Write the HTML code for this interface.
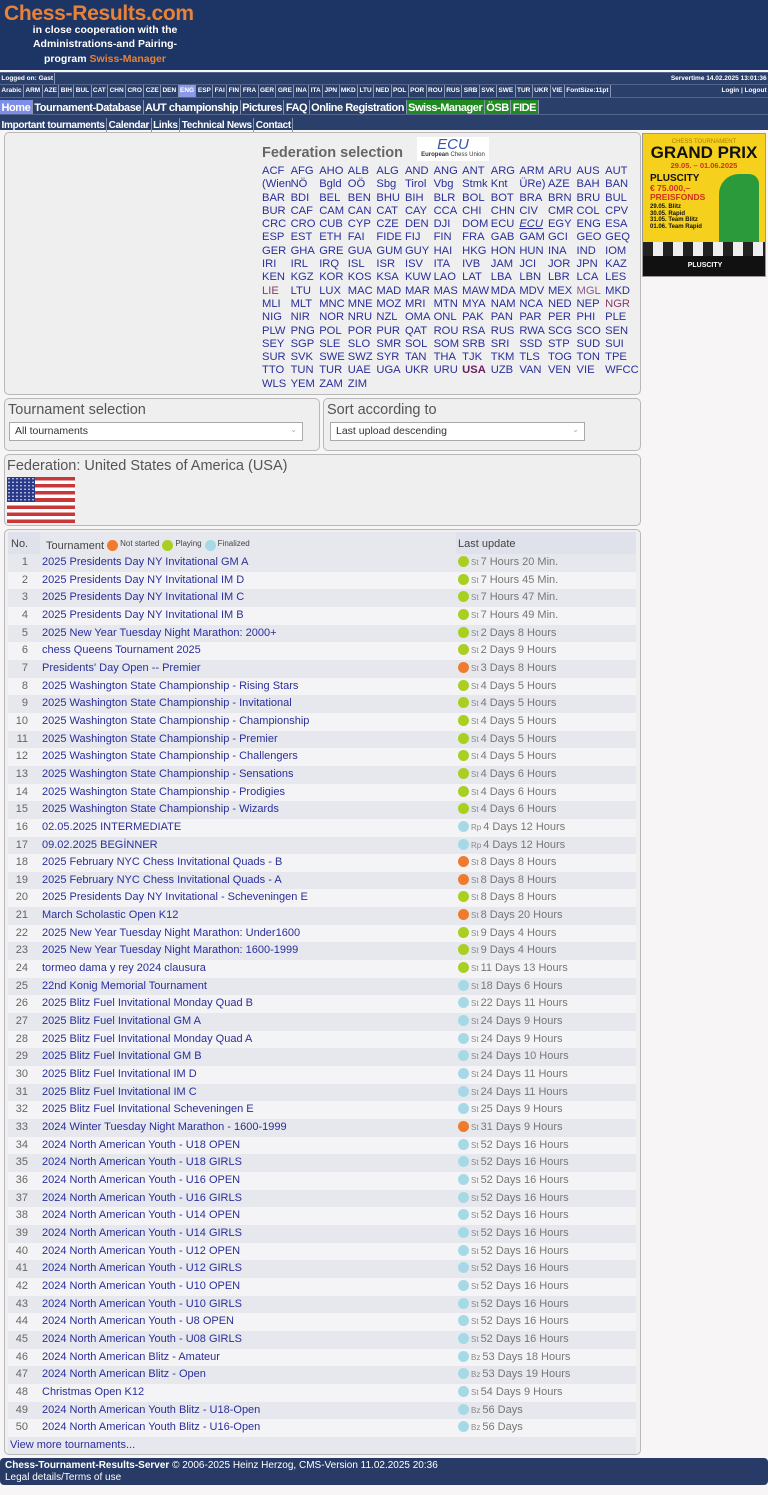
<!DOCTYPE html>
<html><head><meta charset="utf-8"><style>
*{margin:0;padding:0;box-sizing:border-box}
body{width:768px;height:1495px;background:#f7f5f5;font-family:"Liberation Sans",sans-serif;position:relative;overflow:hidden;color:#333}
.hdr{position:absolute;left:0;top:0;width:768px;height:70px;background:#1c3564}
.logo{position:absolute;left:4px;top:2px;color:#e8823a;font-size:21px;font-weight:bold;letter-spacing:-.3px}
.sub{position:absolute;left:0;width:210px;text-align:center;color:#fff;font-size:10.5px;font-weight:bold}
.bar{position:absolute;left:0;width:768px;background:#2b3f6b;color:#fff;font-size:6.5px;font-weight:bold;white-space:nowrap}
.bar span{display:inline-block;padding:0 1.4px;border-right:1px solid #8894b0;line-height:12px}
.menu{position:absolute;left:0;width:768px;background:#2b3f6b;border-top:1px solid #55658a;white-space:nowrap}
.menu span{display:inline-block;color:#fff;font-weight:bold;font-size:11px;padding:0 1.5px;line-height:16px;border-right:1px solid #8894b0;letter-spacing:-.45px}
.box{position:absolute;background:#efefef;border:1px solid #b8b8b8;border-radius:5px}
.grid{position:absolute;left:262px;top:165px;width:380px;font-size:11.2px;line-height:13.3px;color:#2a2f9a}
.grid span{display:inline-block;width:28.6px;white-space:nowrap}
.t{position:absolute;font-size:14.5px;color:#555}
.sel{position:absolute;background:#fff;border:1px solid #aaa;font-size:10.5px;color:#333;padding:2px 5px;height:19px}
.sel i{position:absolute;right:5px;top:2px;font-style:normal;color:#aaa;font-size:8px}
.rows{position:absolute;left:8px;top:554px;width:628px}
.r{height:17.67px;position:relative;font-size:11px;line-height:17.67px}
.r:nth-child(odd){background:#e6e8ee}
.r:nth-child(even){background:#f4f4f6}
.n{position:absolute;left:0;width:20px;text-align:right;color:#666}
.nm{position:absolute;left:34px;color:#2b2f9a;white-space:nowrap}
.u{position:absolute;left:450px;color:#777;white-space:nowrap}
.d{display:inline-block;width:11px;height:11px;border-radius:50%;vertical-align:-2px;margin-right:2px}
.g{background:#a8cf22}.o{background:#ef7b2e}.b{background:#a6d9e6}
.u small{font-size:8px;color:#888;margin-right:2px}
</style></head><body>
<div class="hdr">
<div class="logo">Chess-Results.com</div>
<div class="sub" style="top:24px">in close cooperation with the</div>
<div class="sub" style="top:38px">Administrations-and Pairing-</div>
<div class="sub" style="top:53px">program <span style="color:#e8823a">Swiss-Manager</span></div>
</div>
<div class="bar" style="top:72px;height:12px;border-top:1px solid #55658a"><span>Logged on: Gast</span><span style="position:absolute;right:0;border:0">Servertime 14.02.2025 13:01:36</span></div>
<div class="bar" style="top:84px;height:13px;border-top:1px solid #55658a"><span>Arabic</span><span>ARM</span><span>AZE</span><span>BIH</span><span>BUL</span><span>CAT</span><span>CHN</span><span>CRO</span><span>CZE</span><span>DEN</span><span style="background:#8a9ae8">ENG</span><span>ESP</span><span>FAI</span><span>FIN</span><span>FRA</span><span>GER</span><span>GRE</span><span>INA</span><span>ITA</span><span>JPN</span><span>MKD</span><span>LTU</span><span>NED</span><span>POL</span><span>POR</span><span>ROU</span><span>RUS</span><span>SRB</span><span>SVK</span><span>SWE</span><span>TUR</span><span>UKR</span><span>VIE</span><span>FontSize:11pt</span><span style="position:absolute;right:0;border:0">Login | Logout</span></div>
<div class="menu" style="top:97px;height:17px"><span style="background:#7d8ee8">Home</span><span>Tournament-Database</span><span>AUT championship</span><span>Pictures</span><span>FAQ</span><span>Online Registration</span><span style="background:#1f8a1f">Swiss-Manager</span><span style="background:#1f8a1f">ÖSB</span><span style="background:#1f8a1f">FIDE</span></div>
<div class="menu" style="top:114px;height:16px"><span style="font-size:10px;letter-spacing:-.3px">Important tournaments</span><span style="font-size:10px;letter-spacing:-.3px">Calendar</span><span style="font-size:10px;letter-spacing:-.3px">Links</span><span style="font-size:10px;letter-spacing:-.3px">Technical News</span><span style="font-size:10px;letter-spacing:-.3px">Contact</span></div>

<div class="box" style="left:4px;top:132px;width:637px;height:263px"></div>
<div class="t" style="left:262px;top:145px;font-weight:bold;color:#666">Federation selection</div>
<div style="position:absolute;left:417px;top:137px;width:72px;height:24px;background:#fff;font-size:6px;color:#333;text-align:center"><div style="font-size:15px;color:#3355aa;font-style:italic;line-height:15px">ECU</div><b>European</b> Chess Union</div>
<div class="grid"><span>ACF</span><span>AFG</span><span>AHO</span><span>ALB</span><span>ALG</span><span>AND</span><span>ANG</span><span>ANT</span><span>ARG</span><span>ARM</span><span>ARU</span><span>AUS</span><span>AUT</span><span>(Wien</span><span>NÖ</span><span>Bgld</span><span>OÖ</span><span>Sbg</span><span>Tirol</span><span>Vbg</span><span>Stmk</span><span>Knt</span><span>ÜRe)</span><span>AZE</span><span>BAH</span><span>BAN</span><span>BAR</span><span>BDI</span><span>BEL</span><span>BEN</span><span>BHU</span><span>BIH</span><span>BLR</span><span>BOL</span><span>BOT</span><span>BRA</span><span>BRN</span><span>BRU</span><span>BUL</span><span>BUR</span><span>CAF</span><span>CAM</span><span>CAN</span><span>CAT</span><span>CAY</span><span>CCA</span><span>CHI</span><span>CHN</span><span>CIV</span><span>CMR</span><span>COL</span><span>CPV</span><span>CRC</span><span>CRO</span><span>CUB</span><span>CYP</span><span>CZE</span><span>DEN</span><span>DJI</span><span>DOM</span><span>ECU</span><span style="font-style:italic;text-decoration:underline">ECU</span><span>EGY</span><span>ENG</span><span>ESA</span><span>ESP</span><span>EST</span><span>ETH</span><span>FAI</span><span>FIDE</span><span>FIJ</span><span>FIN</span><span>FRA</span><span>GAB</span><span>GAM</span><span>GCI</span><span>GEO</span><span>GEQ</span><span>GER</span><span>GHA</span><span>GRE</span><span>GUA</span><span>GUM</span><span>GUY</span><span>HAI</span><span>HKG</span><span>HON</span><span>HUN</span><span>INA</span><span>IND</span><span>IOM</span><span>IRI</span><span>IRL</span><span>IRQ</span><span>ISL</span><span>ISR</span><span>ISV</span><span>ITA</span><span>IVB</span><span>JAM</span><span>JCI</span><span>JOR</span><span>JPN</span><span>KAZ</span><span>KEN</span><span>KGZ</span><span>KOR</span><span>KOS</span><span>KSA</span><span>KUW</span><span>LAO</span><span>LAT</span><span>LBA</span><span>LBN</span><span>LBR</span><span>LCA</span><span>LES</span><span style="color:#8a3a6a">LIE</span><span>LTU</span><span>LUX</span><span>MAC</span><span>MAD</span><span>MAR</span><span>MAS</span><span>MAW</span><span>MDA</span><span>MDV</span><span>MEX</span><span style="color:#8a5a8a">MGL</span><span>MKD</span><span>MLI</span><span>MLT</span><span>MNC</span><span>MNE</span><span>MOZ</span><span>MRI</span><span>MTN</span><span>MYA</span><span>NAM</span><span>NCA</span><span>NED</span><span>NEP</span><span style="color:#8a3a6a">NGR</span><span>NIG</span><span>NIR</span><span>NOR</span><span>NRU</span><span>NZL</span><span>OMA</span><span>ONL</span><span>PAK</span><span>PAN</span><span>PAR</span><span>PER</span><span>PHI</span><span>PLE</span><span>PLW</span><span>PNG</span><span>POL</span><span>POR</span><span>PUR</span><span>QAT</span><span>ROU</span><span>RSA</span><span>RUS</span><span>RWA</span><span>SCG</span><span>SCO</span><span>SEN</span><span>SEY</span><span>SGP</span><span>SLE</span><span>SLO</span><span>SMR</span><span>SOL</span><span>SOM</span><span>SRB</span><span>SRI</span><span>SSD</span><span>STP</span><span>SUD</span><span>SUI</span><span>SUR</span><span>SVK</span><span>SWE</span><span>SWZ</span><span>SYR</span><span>TAN</span><span>THA</span><span>TJK</span><span>TKM</span><span>TLS</span><span>TOG</span><span>TON</span><span>TPE</span><span>TTO</span><span>TUN</span><span>TUR</span><span>UAE</span><span>UGA</span><span>UKR</span><span>URU</span><span style="color:#6a2060;font-weight:bold">USA</span><span>UZB</span><span>VAN</span><span>VEN</span><span>VIE</span><span>WFCC</span><span>WLS</span><span>YEM</span><span>ZAM</span><span>ZIM</span></div>

<div style="position:absolute;left:642px;top:133px;width:124px;height:144px;background:#f5d01c;border:1px solid #999;overflow:hidden">
<div style="text-align:center;font-size:6px;color:#b08000;margin-top:5px">CHESS TOURNAMENT</div>
<div style="text-align:center;font-size:17px;font-weight:bold;color:#111;line-height:16px">GRAND PRIX</div>
<div style="text-align:center;font-size:7.5px;font-weight:bold;color:#d03020">29.05. – 01.06.2025</div>
<div style="margin-left:7px;font-size:10px;font-weight:bold;color:#111;margin-top:3px">PLUSCITY</div>
<div style="margin-left:7px;font-size:8.5px;font-weight:bold;color:#d03020;line-height:9px">€ 75.000,–<br>PREISFONDS</div>
<div style="margin-left:7px;font-size:6px;font-weight:bold;color:#111;line-height:6.5px;margin-top:2px">29.05. Blitz<br>30.05. Rapid<br>31.05. Team Blitz<br>01.06. Team Rapid</div>
<div style="position:absolute;right:6px;top:40px;width:40px;height:80px;background:#2a9a3a;border-radius:20px 10px 0 0"></div>
<div style="position:absolute;left:0;bottom:20px;width:124px;height:14px;background:repeating-linear-gradient(90deg,#222 0 10px,#eee 10px 20px)"></div>
<div style="position:absolute;left:0;bottom:0;width:124px;height:20px;background:#111;color:#fff;font-size:7px;text-align:center;line-height:20px;font-weight:bold">PLUSCITY</div>
</div>

<div class="box" style="left:4px;top:398px;width:316px;height:53px"></div>
<div class="t" style="left:8px;top:402px">Tournament selection</div>
<div class="sel" style="left:9px;top:422px;width:294px">All tournaments<i>⌄</i></div>
<div class="box" style="left:323px;top:398px;width:318px;height:53px"></div>
<div class="t" style="left:327px;top:402px">Sort according to</div>
<div class="sel" style="left:330px;top:422px;width:255px">Last upload descending<i>⌄</i></div>

<div class="box" style="left:4px;top:454px;width:637px;height:72px"></div>
<div class="t" style="left:7px;top:458px">Federation: United States of America (USA)</div>
<div style="position:absolute;left:7px;top:477px;width:68px;height:46px;background:repeating-linear-gradient(180deg,#c83838 0 3.54px,#fff 3.54px 7.08px)"><div style="width:28px;height:25px;background:#2a3a8a radial-gradient(#fff 0.7px,transparent 0.8px) 0 0/4px 3.5px"></div></div>

<div class="box" style="left:4px;top:529px;width:637px;height:926px"></div>
<div style="position:absolute;left:8px;top:532px;width:628px;height:22px;background:#dfe2ea;font-size:11px;color:#444;line-height:22px">
<span style="position:absolute;left:3px;top:1px">No.</span>
<span style="position:absolute;left:32px;top:0;bottom:0;width:416px;background:#e6e8ee"></span>
<span style="position:absolute;left:38px;top:1px">Tournament <span class="d o"></span><span style="font-size:8px;vertical-align:3px">Not started</span> <span class="d g"></span><span style="font-size:8px;vertical-align:3px">Playing</span> <span class="d b"></span><span style="font-size:8px;vertical-align:3px">Finalized</span></span>
<span style="position:absolute;left:450px;top:1px">Last update</span></div>
<div class="rows">
<div class="r"><span class="n">1</span><span class="nm">2025 Presidents Day NY Invitational GM A</span><span class="u"><span class="d g"></span><small>St</small>7 Hours 20 Min.</span></div>
<div class="r"><span class="n">2</span><span class="nm">2025 Presidents Day NY Invitational IM D</span><span class="u"><span class="d g"></span><small>St</small>7 Hours 45 Min.</span></div>
<div class="r"><span class="n">3</span><span class="nm">2025 Presidents Day NY Invitational IM C</span><span class="u"><span class="d g"></span><small>St</small>7 Hours 47 Min.</span></div>
<div class="r"><span class="n">4</span><span class="nm">2025 Presidents Day NY Invitational IM B</span><span class="u"><span class="d g"></span><small>St</small>7 Hours 49 Min.</span></div>
<div class="r"><span class="n">5</span><span class="nm">2025 New Year Tuesday Night Marathon: 2000+</span><span class="u"><span class="d g"></span><small>St</small>2 Days 8 Hours</span></div>
<div class="r"><span class="n">6</span><span class="nm">chess Queens Tournament 2025</span><span class="u"><span class="d g"></span><small>St</small>2 Days 9 Hours</span></div>
<div class="r"><span class="n">7</span><span class="nm">Presidents' Day Open -- Premier</span><span class="u"><span class="d o"></span><small>St</small>3 Days 8 Hours</span></div>
<div class="r"><span class="n">8</span><span class="nm">2025 Washington State Championship - Rising Stars</span><span class="u"><span class="d g"></span><small>St</small>4 Days 5 Hours</span></div>
<div class="r"><span class="n">9</span><span class="nm">2025 Washington State Championship - Invitational</span><span class="u"><span class="d g"></span><small>St</small>4 Days 5 Hours</span></div>
<div class="r"><span class="n">10</span><span class="nm">2025 Washington State Championship - Championship</span><span class="u"><span class="d g"></span><small>St</small>4 Days 5 Hours</span></div>
<div class="r"><span class="n">11</span><span class="nm">2025 Washington State Championship - Premier</span><span class="u"><span class="d g"></span><small>St</small>4 Days 5 Hours</span></div>
<div class="r"><span class="n">12</span><span class="nm">2025 Washington State Championship - Challengers</span><span class="u"><span class="d g"></span><small>St</small>4 Days 5 Hours</span></div>
<div class="r"><span class="n">13</span><span class="nm">2025 Washington State Championship - Sensations</span><span class="u"><span class="d g"></span><small>St</small>4 Days 6 Hours</span></div>
<div class="r"><span class="n">14</span><span class="nm">2025 Washington State Championship - Prodigies</span><span class="u"><span class="d g"></span><small>St</small>4 Days 6 Hours</span></div>
<div class="r"><span class="n">15</span><span class="nm">2025 Washington State Championship - Wizards</span><span class="u"><span class="d g"></span><small>St</small>4 Days 6 Hours</span></div>
<div class="r"><span class="n">16</span><span class="nm">02.05.2025 INTERMEDIATE</span><span class="u"><span class="d b"></span><small>Rp</small>4 Days 12 Hours</span></div>
<div class="r"><span class="n">17</span><span class="nm">09.02.2025 BEGİNNER</span><span class="u"><span class="d b"></span><small>Rp</small>4 Days 12 Hours</span></div>
<div class="r"><span class="n">18</span><span class="nm">2025 February NYC Chess Invitational Quads - B</span><span class="u"><span class="d o"></span><small>St</small>8 Days 8 Hours</span></div>
<div class="r"><span class="n">19</span><span class="nm">2025 February NYC Chess Invitational Quads - A</span><span class="u"><span class="d o"></span><small>St</small>8 Days 8 Hours</span></div>
<div class="r"><span class="n">20</span><span class="nm">2025 Presidents Day NY Invitational - Scheveningen E</span><span class="u"><span class="d g"></span><small>St</small>8 Days 8 Hours</span></div>
<div class="r"><span class="n">21</span><span class="nm">March Scholastic Open K12</span><span class="u"><span class="d o"></span><small>St</small>8 Days 20 Hours</span></div>
<div class="r"><span class="n">22</span><span class="nm">2025 New Year Tuesday Night Marathon: Under1600</span><span class="u"><span class="d g"></span><small>St</small>9 Days 4 Hours</span></div>
<div class="r"><span class="n">23</span><span class="nm">2025 New Year Tuesday Night Marathon: 1600-1999</span><span class="u"><span class="d g"></span><small>St</small>9 Days 4 Hours</span></div>
<div class="r"><span class="n">24</span><span class="nm">tormeo dama y rey 2024 clausura</span><span class="u"><span class="d g"></span><small>St</small>11 Days 13 Hours</span></div>
<div class="r"><span class="n">25</span><span class="nm">22nd Konig Memorial Tournament</span><span class="u"><span class="d b"></span><small>St</small>18 Days 6 Hours</span></div>
<div class="r"><span class="n">26</span><span class="nm">2025 Blitz Fuel Invitational Monday Quad B</span><span class="u"><span class="d b"></span><small>St</small>22 Days 11 Hours</span></div>
<div class="r"><span class="n">27</span><span class="nm">2025 Blitz Fuel Invitational GM A</span><span class="u"><span class="d b"></span><small>St</small>24 Days 9 Hours</span></div>
<div class="r"><span class="n">28</span><span class="nm">2025 Blitz Fuel Invitational Monday Quad A</span><span class="u"><span class="d b"></span><small>St</small>24 Days 9 Hours</span></div>
<div class="r"><span class="n">29</span><span class="nm">2025 Blitz Fuel Invitational GM B</span><span class="u"><span class="d b"></span><small>St</small>24 Days 10 Hours</span></div>
<div class="r"><span class="n">30</span><span class="nm">2025 Blitz Fuel Invitational IM D</span><span class="u"><span class="d b"></span><small>St</small>24 Days 11 Hours</span></div>
<div class="r"><span class="n">31</span><span class="nm">2025 Blitz Fuel Invitational IM C</span><span class="u"><span class="d b"></span><small>St</small>24 Days 11 Hours</span></div>
<div class="r"><span class="n">32</span><span class="nm">2025 Blitz Fuel Invitational Scheveningen E</span><span class="u"><span class="d b"></span><small>St</small>25 Days 9 Hours</span></div>
<div class="r"><span class="n">33</span><span class="nm">2024 Winter Tuesday Night Marathon - 1600-1999</span><span class="u"><span class="d o"></span><small>St</small>31 Days 9 Hours</span></div>
<div class="r"><span class="n">34</span><span class="nm">2024 North American Youth - U18 OPEN</span><span class="u"><span class="d b"></span><small>St</small>52 Days 16 Hours</span></div>
<div class="r"><span class="n">35</span><span class="nm">2024 North American Youth - U18 GIRLS</span><span class="u"><span class="d b"></span><small>St</small>52 Days 16 Hours</span></div>
<div class="r"><span class="n">36</span><span class="nm">2024 North American Youth - U16 OPEN</span><span class="u"><span class="d b"></span><small>St</small>52 Days 16 Hours</span></div>
<div class="r"><span class="n">37</span><span class="nm">2024 North American Youth - U16 GIRLS</span><span class="u"><span class="d b"></span><small>St</small>52 Days 16 Hours</span></div>
<div class="r"><span class="n">38</span><span class="nm">2024 North American Youth - U14 OPEN</span><span class="u"><span class="d b"></span><small>St</small>52 Days 16 Hours</span></div>
<div class="r"><span class="n">39</span><span class="nm">2024 North American Youth - U14 GIRLS</span><span class="u"><span class="d b"></span><small>St</small>52 Days 16 Hours</span></div>
<div class="r"><span class="n">40</span><span class="nm">2024 North American Youth - U12 OPEN</span><span class="u"><span class="d b"></span><small>St</small>52 Days 16 Hours</span></div>
<div class="r"><span class="n">41</span><span class="nm">2024 North American Youth - U12 GIRLS</span><span class="u"><span class="d b"></span><small>St</small>52 Days 16 Hours</span></div>
<div class="r"><span class="n">42</span><span class="nm">2024 North American Youth - U10 OPEN</span><span class="u"><span class="d b"></span><small>St</small>52 Days 16 Hours</span></div>
<div class="r"><span class="n">43</span><span class="nm">2024 North American Youth - U10 GIRLS</span><span class="u"><span class="d b"></span><small>St</small>52 Days 16 Hours</span></div>
<div class="r"><span class="n">44</span><span class="nm">2024 North American Youth - U8 OPEN</span><span class="u"><span class="d b"></span><small>St</small>52 Days 16 Hours</span></div>
<div class="r"><span class="n">45</span><span class="nm">2024 North American Youth - U08 GIRLS</span><span class="u"><span class="d b"></span><small>St</small>52 Days 16 Hours</span></div>
<div class="r"><span class="n">46</span><span class="nm">2024 North American Blitz - Amateur</span><span class="u"><span class="d b"></span><small>Bz</small>53 Days 18 Hours</span></div>
<div class="r"><span class="n">47</span><span class="nm">2024 North American Blitz - Open</span><span class="u"><span class="d b"></span><small>Bz</small>53 Days 19 Hours</span></div>
<div class="r"><span class="n">48</span><span class="nm">Christmas Open K12</span><span class="u"><span class="d b"></span><small>St</small>54 Days 9 Hours</span></div>
<div class="r"><span class="n">49</span><span class="nm">2024 North American Youth Blitz - U18-Open</span><span class="u"><span class="d b"></span><small>Bz</small>56 Days</span></div>
<div class="r"><span class="n">50</span><span class="nm">2024 North American Youth Blitz - U16-Open</span><span class="u"><span class="d b"></span><small>Bz</small>56 Days</span></div>
<div class="r" style="background:#e6e8ee"><span style="position:absolute;left:2px;color:#2b2f9a">View more tournaments...</span></div>
</div>

<div style="position:absolute;left:0;top:1458px;width:768px;height:27px;background:#283a66;border-radius:4px;color:#fff;font-size:10px;line-height:12px;padding:2px 5px"><b>Chess-Tournament-Results-Server</b> © 2006-2025 Heinz Herzog, CMS-Version 11.02.2025 20:36<br>Legal details/Terms of use</div>
</body></html>
